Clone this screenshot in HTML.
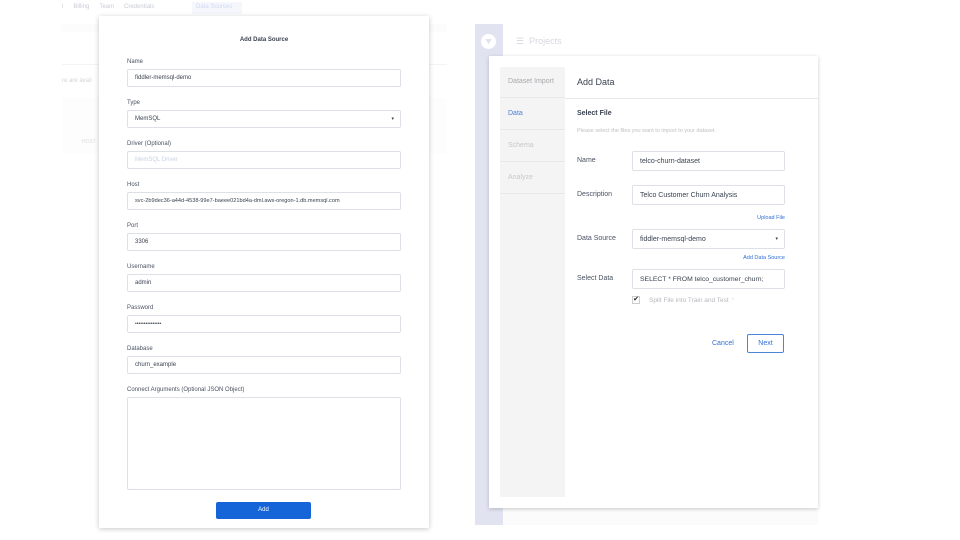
<!DOCTYPE html>
<html><head><meta charset="utf-8"><style>
*{margin:0;padding:0;box-sizing:border-box}
body{width:960px;height:540px;background:#fff;position:relative;overflow:hidden;font-family:"Liberation Sans",sans-serif;color:#3a4250}
.a{position:absolute;white-space:nowrap}
.lbl{font-size:6px;color:#4a5262}
.in{position:absolute;left:127px;width:274px;height:18px;border:1px solid #dde0e6;border-radius:2px;font-size:6px;padding-left:7px;line-height:17px;color:#3a4250;background:#fff}
.rin{position:absolute;left:632px;width:153px;height:20px;border:1px solid #dde0e6;border-radius:2px;font-size:7px;padding-left:7px;line-height:19px;color:#3a4250;background:#fff}
.rl{position:absolute;left:577px;font-size:7px;color:#4a5262}
.nav{position:absolute;left:500px;width:65px;height:32px;border-bottom:1px solid #e8e8ea;font-size:7px;color:#c8c8cc;padding-left:8px;line-height:31px}
</style></head><body>
<div class="a" style="left:62px;top:4px;font-size:6px;color:#c8ccd4">l&nbsp;&nbsp;&nbsp;&nbsp;&nbsp;&nbsp;Billing&nbsp;&nbsp;&nbsp;&nbsp;&nbsp;&nbsp;Team&nbsp;&nbsp;&nbsp;&nbsp;&nbsp;&nbsp;Credentials</div>
<div class="a" style="left:192px;top:2px;width:50px;height:12px;background:#f5f7fd;font-size:6px;color:#d0d8f0;padding:2px 4px">Data Sources</div>
<div class="a" style="left:62px;top:24px;width:385px;height:8px;background:#fcfcfc"></div>
<div class="a" style="left:62px;top:64px;width:385px;height:1px;background:#f4f4f4"></div>
<div class="a" style="left:62px;top:78px;font-size:6px;color:#d4d4d8">re are avail</div>
<div class="a" style="left:62px;top:98px;width:385px;height:56px;background:#fdfdfd"></div>
<div class="a" style="left:82px;top:139px;font-size:5px;color:#dcdce0">HOST</div>
<div class="a" style="left:99px;top:16px;width:330px;height:512px;background:#fff;box-shadow:0 1px 5px rgba(0,0,0,.22)"></div>
<div class="a" style="left:99px;top:37px;width:330px;text-align:center;font-size:6px;font-weight:bold;color:#3a4250">Add Data Source</div>
<div class="a lbl" style="left:127px;top:59px">Name</div><div class="in" style="top:69px">fiddler-memsql-demo</div>
<div class="a lbl" style="left:127px;top:100px">Type</div><div class="in" style="top:110px">MemSQL<span style="position:absolute;right:6px;font-size:5px">▾</span></div>
<div class="a lbl" style="left:127px;top:141px">Driver (Optional)</div><div class="in" style="top:151px;color:#c8d0e4">MemSQL Driver</div>
<div class="a lbl" style="left:127px;top:182px">Host</div><div class="in" style="top:192px;font-size:5.6px">svc-2b9dec36-a44d-4538-99e7-baeee021bd4a-dml.aws-oregon-1.db.memsql.com</div>
<div class="a lbl" style="left:127px;top:223px">Port</div><div class="in" style="top:233px">3306</div>
<div class="a lbl" style="left:127px;top:264px">Username</div><div class="in" style="top:274px">admin</div>
<div class="a lbl" style="left:127px;top:305px">Password</div><div class="in" style="top:315px;font-size:5px">•••••••••••••••</div>
<div class="a lbl" style="left:127px;top:346px">Database</div><div class="in" style="top:356px">churn_example</div>
<div class="a lbl" style="left:127px;top:387px">Connect Arguments (Optional JSON Object)</div><div class="in" style="top:397px;height:93px"></div>
<div class="a" style="left:216px;top:502px;width:95px;height:17px;background:#1565d8;border-radius:2px;color:#fff;font-size:6px;text-align:center;line-height:17px">Add</div>
<div class="a" style="left:475px;top:24px;width:28px;height:501px;background:#e1e3f1"></div>
<div class="a" style="left:481px;top:34px;width:15px;height:15px;border-radius:50%;background:#fff"></div>
<div class="a" style="left:485px;top:39px;width:7px;height:5px;background:#e1e3f1;clip-path:polygon(0 0,100% 0,50% 100%)"></div>
<div class="a" style="left:516px;top:36px;font-size:9px;color:#d6d8e0">☰&nbsp;&nbsp;Projects</div>
<div class="a" style="left:503px;top:508px;width:315px;height:17px;background:#fbfbfc"></div>
<div class="a" style="left:489px;top:56px;width:329px;height:452px;background:#fff;box-shadow:0 1px 4px rgba(0,0,0,.2)"></div>
<div class="a" style="left:500px;top:67px;width:65px;height:430px;background:#f4f4f4"></div>
<div class="nav" style="top:66px;color:#a8a8ae">Dataset Import</div>
<div class="nav" style="top:98px;color:#4a7fd4">Data</div>
<div class="nav" style="top:130px">Schema</div>
<div class="nav" style="top:162px">Analyze</div>
<div class="a" style="left:577px;top:77px;font-size:9px;color:#3a4250">Add Data</div>
<div class="a" style="left:565px;top:98px;width:253px;height:1px;background:#e8e8ea"></div>
<div class="a" style="left:577px;top:110px;font-size:7px;font-weight:bold;color:#3a4250">Select File</div>
<div class="a" style="left:577px;top:128px;font-size:5.5px;color:#c0c0c6">Please select the files you want to import to your dataset.</div>
<div class="rl" style="top:157px">Name</div><div class="rin" style="top:151px">telco-churn-dataset</div>
<div class="rl" style="top:191px">Description</div><div class="rin" style="top:185px">Telco Customer Churn Analysis</div>
<div class="a" style="left:700px;top:215px;width:85px;text-align:right;font-size:5.5px;color:#2f6fd6">Upload File</div>
<div class="rl" style="top:235px">Data Source</div><div class="rin" style="top:229px">fiddler-memsql-demo<span style="position:absolute;right:6px;font-size:5px">▾</span></div>
<div class="a" style="left:700px;top:255px;width:85px;text-align:right;font-size:5.5px;color:#2f6fd6">Add Data Source</div>
<div class="rl" style="top:275px">Select Data</div><div class="rin" style="top:269px;font-size:6.8px">SELECT * FROM telco_customer_churn;</div>
<div class="a" style="left:632px;top:296px;width:8px;height:8px;border:1px solid #ccc;font-size:7px;line-height:6px;color:#222;text-align:center">✔</div>
<div class="a" style="left:649px;top:296px;font-size:6.5px;color:#b8b8be">Split File into Train and Test &nbsp;ⁱ</div>
<div class="a" style="left:712px;top:340px;font-size:7px;color:#2f6fd6">Cancel</div>
<div class="a" style="left:747px;top:334px;width:37px;height:19px;border:1px solid #4a86d8;border-radius:2px;font-size:7px;color:#2f6fd6;text-align:center;line-height:17px">Next</div>
</body></html>
